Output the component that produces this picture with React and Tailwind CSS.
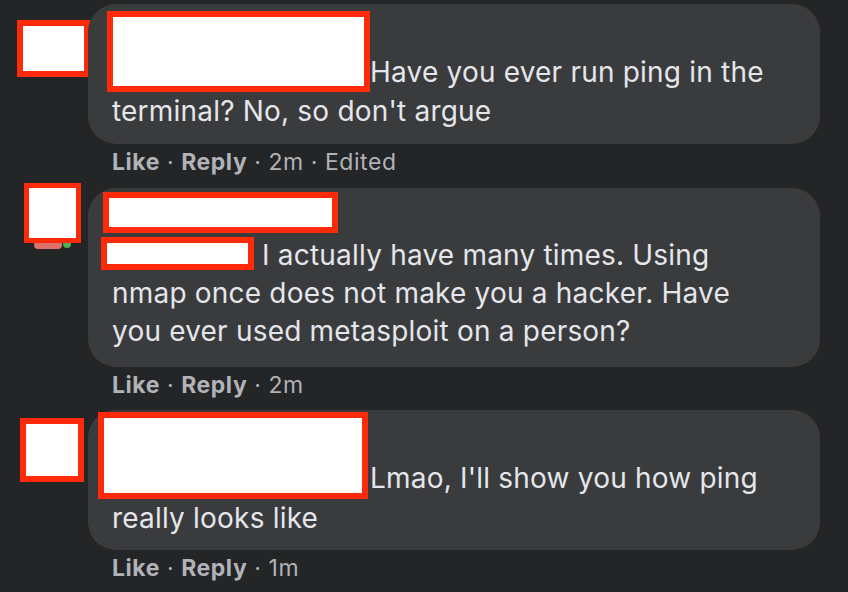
import React from "react";

const font = { fontFamily: "Inter, 'Noto Sans', sans-serif" };

function Meta({ time, edited }) {
  return (
    <div className="mt-[4px] pl-[24px] text-[23px] leading-[28px] text-[#b0b3b8] tracking-[0.55px]">
      <span className="font-bold">Like</span>
      <span> · </span>
      <span className="font-bold">Reply</span>
      <span> · {time}</span>
      {edited && <span> · Edited</span>}
    </div>
  );
}

export default function App() {
  return (
    <div
      className="w-[848px] h-[592px] overflow-hidden bg-[#242526] text-[#e4e6eb] pt-[4px]"
      style={font}
    >
      {/* Comment 1 */}
      <div className="flex">
        <div className="w-[88px] shrink-0">
          <div className="mt-[16px] ml-[17px] w-[73px] h-[57px] bg-white border-[6px] border-[#ff2a0a]" />
        </div>
        <div className="flex-1 mr-[28px]">
          <div className="bg-[#3a3b3c] rounded-[28px] pt-[7px] pb-[14px] pl-[24px] pr-[42px] text-[28px] leading-[38px] tracking-[0.2px]">
            <span className="inline-block ml-[-5px] w-[263px] h-[81px] bg-white border-[6px] border-[#ff2a0a] align-[-10px]" />
            Have you ever run ping in the terminal? No, so don't argue
          </div>
          <Meta time="2m" edited />
        </div>
      </div>

      {/* Comment 2 */}
      <div className="flex mt-[12px]">
        <div className="w-[88px] shrink-0 relative">
          <div className="absolute left-[34px] top-[53px] w-[28px] h-[8px] rounded-full bg-[#e0706a]" />
          <div className="absolute left-[63px] top-[52px] w-[8px] h-[8px] rounded-full bg-[#4caf50]" />
          <div className="relative mt-[-5px] ml-[24px] w-[57px] h-[60px] bg-white border-[5px] border-[#ff2a0a]" />
        </div>
        <div className="flex-1 mr-[28px]">
          <div className="bg-[#3a3b3c] rounded-[28px] pt-[4px] pb-[17px] pl-[24px] pr-[42px] text-[28px] leading-[38px] tracking-[0.2px]">
            <div className="ml-[-9px] w-[235px] h-[41px] bg-white border-[6px] border-[#ff2a0a]" />
            <div className="mt-[3px]">
              <span className="inline-block ml-[-11px] w-[153px] h-[33px] bg-white border-[6px] border-[#ff2a0a] align-[-5px]" />{" "}
              I actually have many times. Using nmap once does not make you a hacker. Have you ever used metasploit on a person?
            </div>
          </div>
          <Meta time="2m" />
        </div>
      </div>

      {/* Comment 3 */}
      <div className="flex mt-[11px]">
        <div className="w-[88px] shrink-0">
          <div className="mt-[8px] ml-[20px] w-[64px] h-[64px] bg-white border-[6px] border-[#ff2a0a]" />
        </div>
        <div className="flex-1 mr-[28px]">
          <div className="bg-[#3a3b3c] rounded-[28px] pt-[2px] pb-[13px] pl-[24px] pr-[42px] text-[28px] leading-[38px] tracking-[0.2px]">
            <span className="inline-block ml-[-14px] mr-[2px] w-[270px] h-[87px] bg-white border-[6px] border-[#ff2a0a] align-[-11px]" />
            Lmao, I'll show you how ping really looks like
          </div>
          <Meta time="1m" />
        </div>
      </div>
    </div>
  );
}
